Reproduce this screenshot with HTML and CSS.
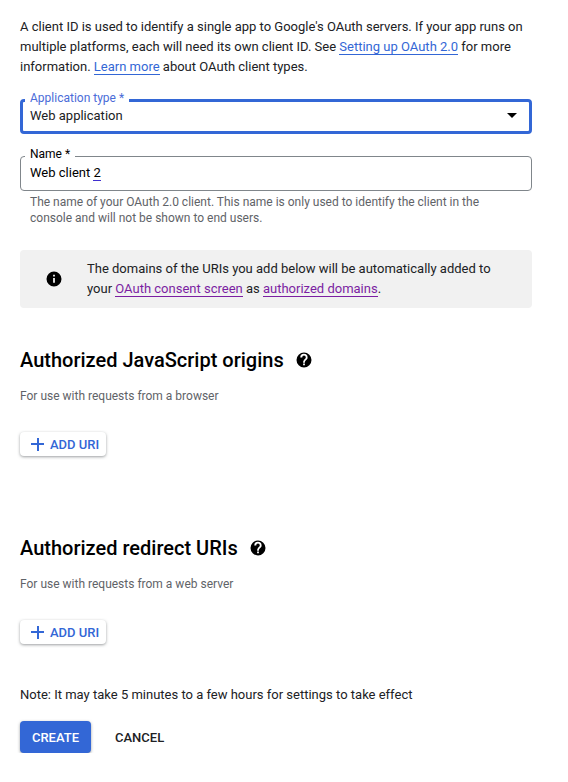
FILE: index.html
```html
<!DOCTYPE html>
<html lang="en">
<head>
  <meta charset="UTF-8">
  <title>Create OAuth client ID</title>
  <link rel="stylesheet" href="styles.css">
</head>
<body>

  <div class="page">
    <p class="intro">A client ID is used to identify a single app to Google's OAuth servers. If your app runs on multiple platforms, each will need its own client ID. See <a class="link" href="#">Setting up OAuth 2.0</a> for more information. <a class="link" href="#">Learn more</a> about OAuth client types.</p>

    <div class="field field-focused">
      <label class="field-label">Application type *</label>
      <span class="field-value">Web application</span>
      <span class="select-arrow"></span>
    </div>

    <div class="field field-name">
      <label class="field-label">Name *</label>
      <span class="field-value">Web client <span class="spell">2</span></span>
    </div>
    <p class="hint">The name of your OAuth 2.0 client. This name is only used to identify the client in the console and will not be shown to end users.</p>

    <div class="notice">
      <svg class="notice-icon" viewBox="0 0 24 24" width="18" height="18"><path d="M12 2a10 10 0 1 0 0 20 10 10 0 0 0 0-20zm1.2 15h-2.4v-6.5h2.4V17zm0-8.4h-2.4V6.3h2.4v2.3z"/></svg>
      <p class="notice-text">The domains of the URIs you add below will be automatically added to your <a class="link link-visited" href="#">OAuth consent screen</a> as <a class="link link-visited" href="#">authorized domains</a>.</p>
    </div>

    <section class="origins">
      <h2 class="section-title">Authorized JavaScript origins
        <svg class="help-icon" viewBox="0 0 24 24" width="18" height="18"><path d="M12 2a10 10 0 1 0 0 20 10 10 0 0 0 0-20zm1.2 17h-2.4v-2.4h2.4V19zm2.5-7.7-1.1 1.1c-.9.9-1.4 1.6-1.4 3.1h-2.4v-.6c0-1.3.5-2.4 1.4-3.3l1.5-1.5c.4-.4.7-1 .7-1.6a2.4 2.4 0 0 0-4.8 0H7a4.9 4.9 0 0 1 9.8 0c0 1.1-.4 2-1.1 2.8z"/></svg>
      </h2>
      <p class="section-help">For use with requests from a browser</p>
      <button class="add-button"><span class="plus"></span>ADD URI</button>
    </section>

    <section class="redirects">
      <h2 class="section-title">Authorized redirect URIs
        <svg class="help-icon" viewBox="0 0 24 24" width="18" height="18"><path d="M12 2a10 10 0 1 0 0 20 10 10 0 0 0 0-20zm1.2 17h-2.4v-2.4h2.4V19zm2.5-7.7-1.1 1.1c-.9.9-1.4 1.6-1.4 3.1h-2.4v-.6c0-1.3.5-2.4 1.4-3.3l1.5-1.5c.4-.4.7-1 .7-1.6a2.4 2.4 0 0 0-4.8 0H7a4.9 4.9 0 0 1 9.8 0c0 1.1-.4 2-1.1 2.8z"/></svg>
      </h2>
      <p class="section-help">For use with requests from a web server</p>
      <button class="add-button"><span class="plus"></span>ADD URI</button>
    </section>

    <p class="note">Note: It may take 5 minutes to a few hours for settings to take effect</p>

    <div class="actions">
      <button class="create-button">CREATE</button>
      <button class="cancel-button">CANCEL</button>
    </div>
  </div>

</body>
</html>
```

FILE: styles.css
```css
body {
  margin: 0;
  background-color: #fff;
  color: #202124;
  font-family: Roboto, "Liberation Sans", sans-serif;
  font-size: 13px;
}

.page {
  width: 512px;
  padding: 17px 0 0 20px;
}

.intro {
  margin: 0;
  line-height: 20px;
}

.link {
  color: #3367d6;
  text-decoration: none;
  border-bottom: 1px solid #3367d6;
}

.link-visited {
  color: #7b1fa2;
  border-bottom-color: #7b1fa2;
}

.field {
  position: relative;
  box-sizing: border-box;
  height: 35px;
  margin-top: 22px;
  padding: 0 9px;
  display: flex;
  align-items: center;
  border: 1px solid #80868b;
  border-radius: 4px;
}

.field-focused {
  border: 3px solid #3367d6;
  padding: 0 7px 3px;
}

.field-name {
  margin-top: 22px;
  padding-bottom: 3px;
  color: #000;
}

.field-label {
  position: absolute;
  top: -11px;
  left: 4px;
  padding: 0 5px;
  background-color: #fff;
  font-size: 12px;
  line-height: 16px;
  color: #000;
}

.field-focused .field-label {
  top: -12px;
  left: 2px;
  color: #4a6cd8;
}

.select-arrow {
  margin-left: auto;
  margin-right: 5px;
  border-left: 5px solid transparent;
  border-right: 5px solid transparent;
  border-top: 5px solid #000;
}

.spell {
  border-bottom: 1px solid #3f2fd0;
}

.hint {
  margin: 3px 0 0;
  padding: 0 10px;
  font-size: 12px;
  line-height: 16px;
  color: #5f6368;
}

.notice {
  box-sizing: border-box;
  height: 58px;
  margin-top: 24px;
  padding: 0 20px 0 25px;
  display: flex;
  align-items: center;
  background-color: #f1f1f1;
  border-radius: 4px;
}

.notice-icon {
  flex: none;
  margin-right: 24px;
}

.notice-text {
  margin: 0;
  line-height: 20px;
}

.section-title {
  margin: 0;
  display: flex;
  align-items: center;
  font-size: 20px;
  font-weight: 500;
  line-height: 24px;
  color: #000;
}

.help-icon {
  margin-left: 11px;
}

.origins {
  margin-top: 40px;
}

.redirects {
  margin-top: 80px;
}

.section-help {
  margin: 16px 0 0;
  font-size: 12px;
  line-height: 16px;
  color: #5f6368;
}

.add-button {
  margin-top: 28px;
  height: 24px;
  padding: 0 7px 0 11px;
  display: flex;
  align-items: center;
  border: none;
  border-radius: 4px;
  background-color: #fff;
  box-shadow: 0 1px 3px rgba(60, 64, 67, 0.5);
  color: #3367d6;
  font-family: inherit;
  font-size: 13px;
  font-weight: 500;
}

.plus {
  width: 13px;
  height: 13px;
  margin-right: 6px;
  background:
    linear-gradient(#3367d6, #3367d6) center / 13px 2px no-repeat,
    linear-gradient(#3367d6, #3367d6) center / 2px 13px no-repeat;
}

.note {
  margin: 43px 0 0;
  line-height: 16px;
}

.actions {
  margin-top: 18px;
  display: flex;
  align-items: center;
}

.create-button {
  height: 32px;
  width: 71px;
  padding: 0;
  border: none;
  border-radius: 4px;
  background-color: #3367d6;
  box-shadow: 0 1px 3px rgba(60, 64, 67, 0.5);
  color: #fff;
  font-family: inherit;
  font-size: 13px;
  font-weight: 500;
}

.cancel-button {
  margin-left: 8px;
  height: 32px;
  padding: 0 16px;
  border: none;
  background: none;
  color: #202124;
  font-family: inherit;
  font-size: 13px;
  font-weight: 500;
}
```
